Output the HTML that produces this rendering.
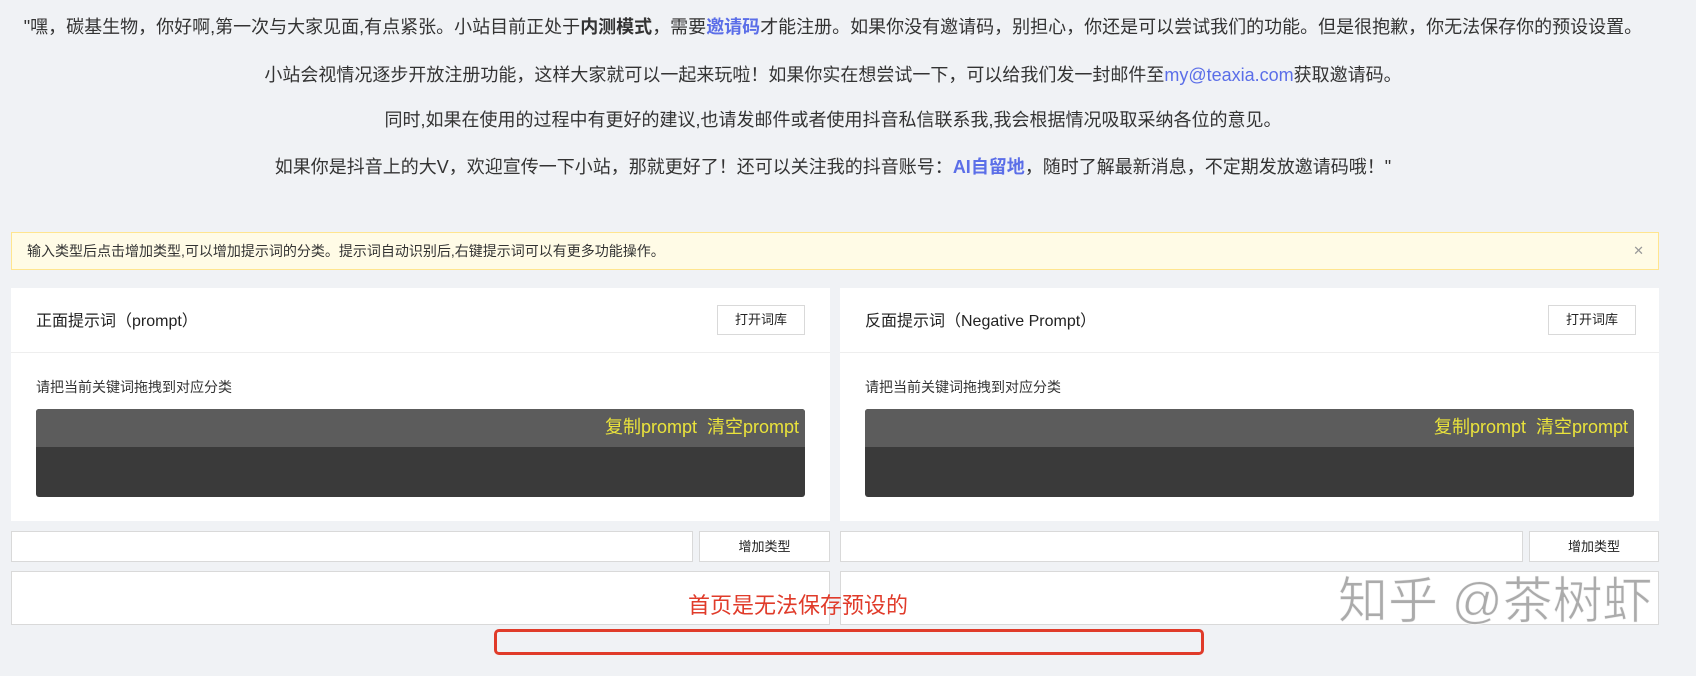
<!DOCTYPE html>
<html><head><meta charset="utf-8">
<style>
*{box-sizing:border-box;margin:0;padding:0}
body{width:1696px;height:676px;background:#f0f2f5;font-family:"Liberation Sans","Noto Sans CJK SC",sans-serif;color:#333;position:relative;overflow:hidden}
.line{position:absolute;left:0;width:1666px;text-align:center;font-size:18px;line-height:24px;white-space:nowrap}
.blue{color:#5b6ee8}
b{font-weight:700}
.alert{position:absolute;left:11px;top:232px;width:1648px;height:38px;background:#fffbe6;border:1px solid #ffe58f;font-size:14px;line-height:36px;padding-left:15px;color:#333}
.alert .x{position:absolute;right:14px;top:0;color:#999;font-size:13px}
.panel{position:absolute;top:288px;height:233px;background:#fff}
.ph{height:65px;border-bottom:1px solid #eee;position:relative}
.title{position:absolute;top:19px;font-size:16px;color:#222}
.btn{position:absolute;background:#fff;border:1px solid #d9d9d9;font-size:13px;text-align:center;color:#222}
.hint{position:absolute;top:89px;font-size:14px;color:#333}
.dark{position:absolute;top:121px;height:88px;background:#3a3a3a;border-radius:3px;overflow:hidden}
.dark .top{height:38px;background:#5c5c5c;text-align:right;color:#eae33b;font-size:18px;line-height:36px;padding-right:6px}
.inp{position:absolute;top:531px;height:31px;background:#fff;border:1px solid #d9d9d9}
.ta{position:absolute;top:571px;height:54px;background:#fff;border:1px solid #d9d9d9}
</style></head><body>
<div class="line" style="top:15px">"嘿，碳基生物，你好啊,第一次与大家见面,有点紧张。小站目前正处于<b>内测模式</b>，需要<b class="blue">邀请码</b>才能注册。如果你没有邀请码，别担心，你还是可以尝试我们的功能。但是很抱歉，你无法保存你的预设设置。</div>
<div class="line" style="top:63px">小站会视情况逐步开放注册功能，这样大家就可以一起来玩啦！如果你实在想尝试一下，可以给我们发一封邮件至<span class="blue">my@teaxia.com</span>获取邀请码。</div>
<div class="line" style="top:108px">同时,如果在使用的过程中有更好的建议,也请发邮件或者使用抖音私信联系我,我会根据情况吸取采纳各位的意见。</div>
<div class="line" style="top:155px">如果你是抖音上的大V，欢迎宣传一下小站，那就更好了！还可以关注我的抖音账号：<b class="blue">AI自留地</b>，随时了解最新消息，不定期发放邀请码哦！"</div>

<div class="alert">输入类型后点击增加类型,可以增加提示词的分类。提示词自动识别后,右键提示词可以有更多功能操作。<span class="x">✕</span></div>

<div class="panel" style="left:11px;width:819px">
 <div class="ph"><div class="title" style="left:25px">正面提示词（prompt）</div>
 <div class="btn" style="left:706px;top:17px;width:88px;height:30px;line-height:28px">打开词库</div></div>
 <div class="hint" style="left:25px">请把当前关键词拖拽到对应分类</div>
 <div class="dark" style="left:25px;width:769px"><div class="top">复制prompt&nbsp; 清空prompt</div></div>
</div>
<div class="panel" style="left:840px;width:819px">
 <div class="ph"><div class="title" style="left:25px">反面提示词（Negative Prompt）</div>
 <div class="btn" style="left:708px;top:17px;width:88px;height:30px;line-height:28px">打开词库</div></div>
 <div class="hint" style="left:25px">请把当前关键词拖拽到对应分类</div>
 <div class="dark" style="left:25px;width:769px"><div class="top">复制prompt&nbsp; 清空prompt</div></div>
</div>

<div class="inp" style="left:11px;width:682px"></div>
<div class="btn" style="left:699px;top:531px;width:131px;height:31px;line-height:29px">增加类型</div>
<div class="inp" style="left:840px;width:683px"></div>
<div class="btn" style="left:1529px;top:531px;width:130px;height:31px;line-height:29px">增加类型</div>
<div class="ta" style="left:11px;width:819px"></div>
<div class="ta" style="left:840px;width:819px"></div>

<div style="position:absolute;left:688px;top:592px;font-size:22px;color:#e03b2a;line-height:28px">首页是无法保存预设的</div>
<div style="position:absolute;left:494px;top:629px;width:710px;height:26px;border:3px solid #e03b2a;border-radius:5px"></div>
<div style="position:absolute;left:1338px;top:572px;font-size:50px;line-height:58px;color:rgba(150,150,150,0.8);-webkit-text-stroke:1px rgba(255,255,255,0.8);white-space:nowrap">知乎 @茶树虾</div>
</body></html>
